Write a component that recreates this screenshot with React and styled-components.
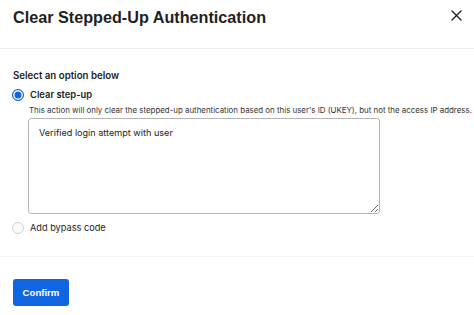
import React, { useState } from "react";
import styled, { createGlobalStyle } from "styled-components";

const Global = createGlobalStyle`
  html, body { margin: 0; padding: 0; background: #fff; }
  body { font-family: Inter, "Noto Sans", sans-serif; color: #1d1d1f; }
  * { box-sizing: border-box; }
`;

const Dialog = styled.div`
  width: 474px;
  height: 315px;
  display: flex;
  flex-direction: column;
  background: #fff;
`;

const Header = styled.div`
  height: 49px;
  padding: 0 13px;
  display: flex;
  align-items: center;
  justify-content: space-between;
  border-bottom: 1px solid #ececec;
`;

const Title = styled.h1`
  margin: 0;
  margin-top: -14px;
  font-family: "Liberation Sans", Arial, sans-serif;
  font-weight: 700;
  font-size: 16.2px;
  color: #1f1f1f;
`;

const CloseButton = styled.button`
  border: 0;
  background: none;
  padding: 0;
  margin-top: -17px;
  margin-right: -2px;
  width: 14px;
  height: 14px;
  display: flex;
  align-items: center;
  justify-content: center;
  cursor: pointer;
`;

const Body = styled.div`
  padding: 20px 13px 0 12px;
  height: 208px;
  border-bottom: 1px solid #f4f4f4;
`;

const SectionLabel = styled.div`
  font-size: 9.7px;
  line-height: 14px;
  font-weight: 600;
  color: #1d1d1f;
  padding-left: 1px;
`;

const OptionRow = styled.label`
  display: flex;
  align-items: center;
  gap: 6px;
  margin-top: ${(p) => p.$mt}px;
  cursor: pointer;
`;

const Radio = styled.span`
  width: 12px;
  height: 12px;
  border-radius: 50%;
  flex: none;
  border: ${(p) => (p.$checked ? "1.5px solid #1565e0" : "1px solid #d0d0d0")};
  background: ${(p) => (p.$checked ? "#1565e0" : "#fafafa")};
  box-shadow: ${(p) => (p.$checked ? "inset 0 0 0 1.5px #fff" : "none")};
`;

const OptionText = styled.span`
  font-size: ${(p) => (p.$bold ? 9.4 : 9.2)}px;
  line-height: 14px;
  font-weight: ${(p) => (p.$bold ? 600 : 400)};
  color: #1d1d1f;
`;

const Description = styled.div`
  margin: 3px 0 0 17px;
  font-size: 7.9px;
  line-height: 10px;
  color: #333;
  white-space: nowrap;
`;

const TextArea = styled.textarea`
  display: block;
  margin: 3px 0 0 16px;
  width: 352px;
  height: 96px;
  padding: 7px 10px;
  border: 1px solid #b5b5b5;
  border-radius: 3px;
  font-family: Inter, "Noto Sans", sans-serif;
  font-size: 9.1px;
  line-height: 14px;
  color: #1d1d1f;
  resize: vertical;
  outline: none;
`;

const Footer = styled.div`
  padding: 22px 13px 0;
`;

const ConfirmButton = styled.button`
  width: 56px;
  height: 27px;
  border: 0;
  border-radius: 3px;
  background: #0f66e0;
  color: #fff;
  font-family: "Liberation Sans", Arial, sans-serif;
  font-size: 9.6px;
  font-weight: 700;
  cursor: pointer;
`;

export default function App() {
  const [choice, setChoice] = useState("clear");
  const [text, setText] = useState("Verified login attempt with user");
  return (
    <>
      <Global />
      <Dialog>
        <Header>
          <Title>Clear Stepped-Up Authentication</Title>
          <CloseButton aria-label="Close">
            <svg width="11" height="11" viewBox="0 0 11 11">
              <path d="M1 1L10 10M10 1L1 10" stroke="#222" strokeWidth="1.4" strokeLinecap="round" />
            </svg>
          </CloseButton>
        </Header>
        <Body>
          <SectionLabel>Select an option below</SectionLabel>
          <OptionRow $mt={5} onClick={() => setChoice("clear")}>
            <Radio $checked={choice === "clear"} />
            <OptionText $bold>Clear step-up</OptionText>
          </OptionRow>
          <Description>
            This action will only clear the stepped-up authentication based on this user's ID (UKEY), but not the access IP address.
          </Description>
          <TextArea value={text} onChange={(e) => setText(e.target.value)} />
          <OptionRow $mt={7} onClick={() => setChoice("bypass")}>
            <Radio $checked={choice === "bypass"} />
            <OptionText>Add bypass code</OptionText>
          </OptionRow>
        </Body>
        <Footer>
          <ConfirmButton>Confirm</ConfirmButton>
        </Footer>
      </Dialog>
    </>
  );
}
